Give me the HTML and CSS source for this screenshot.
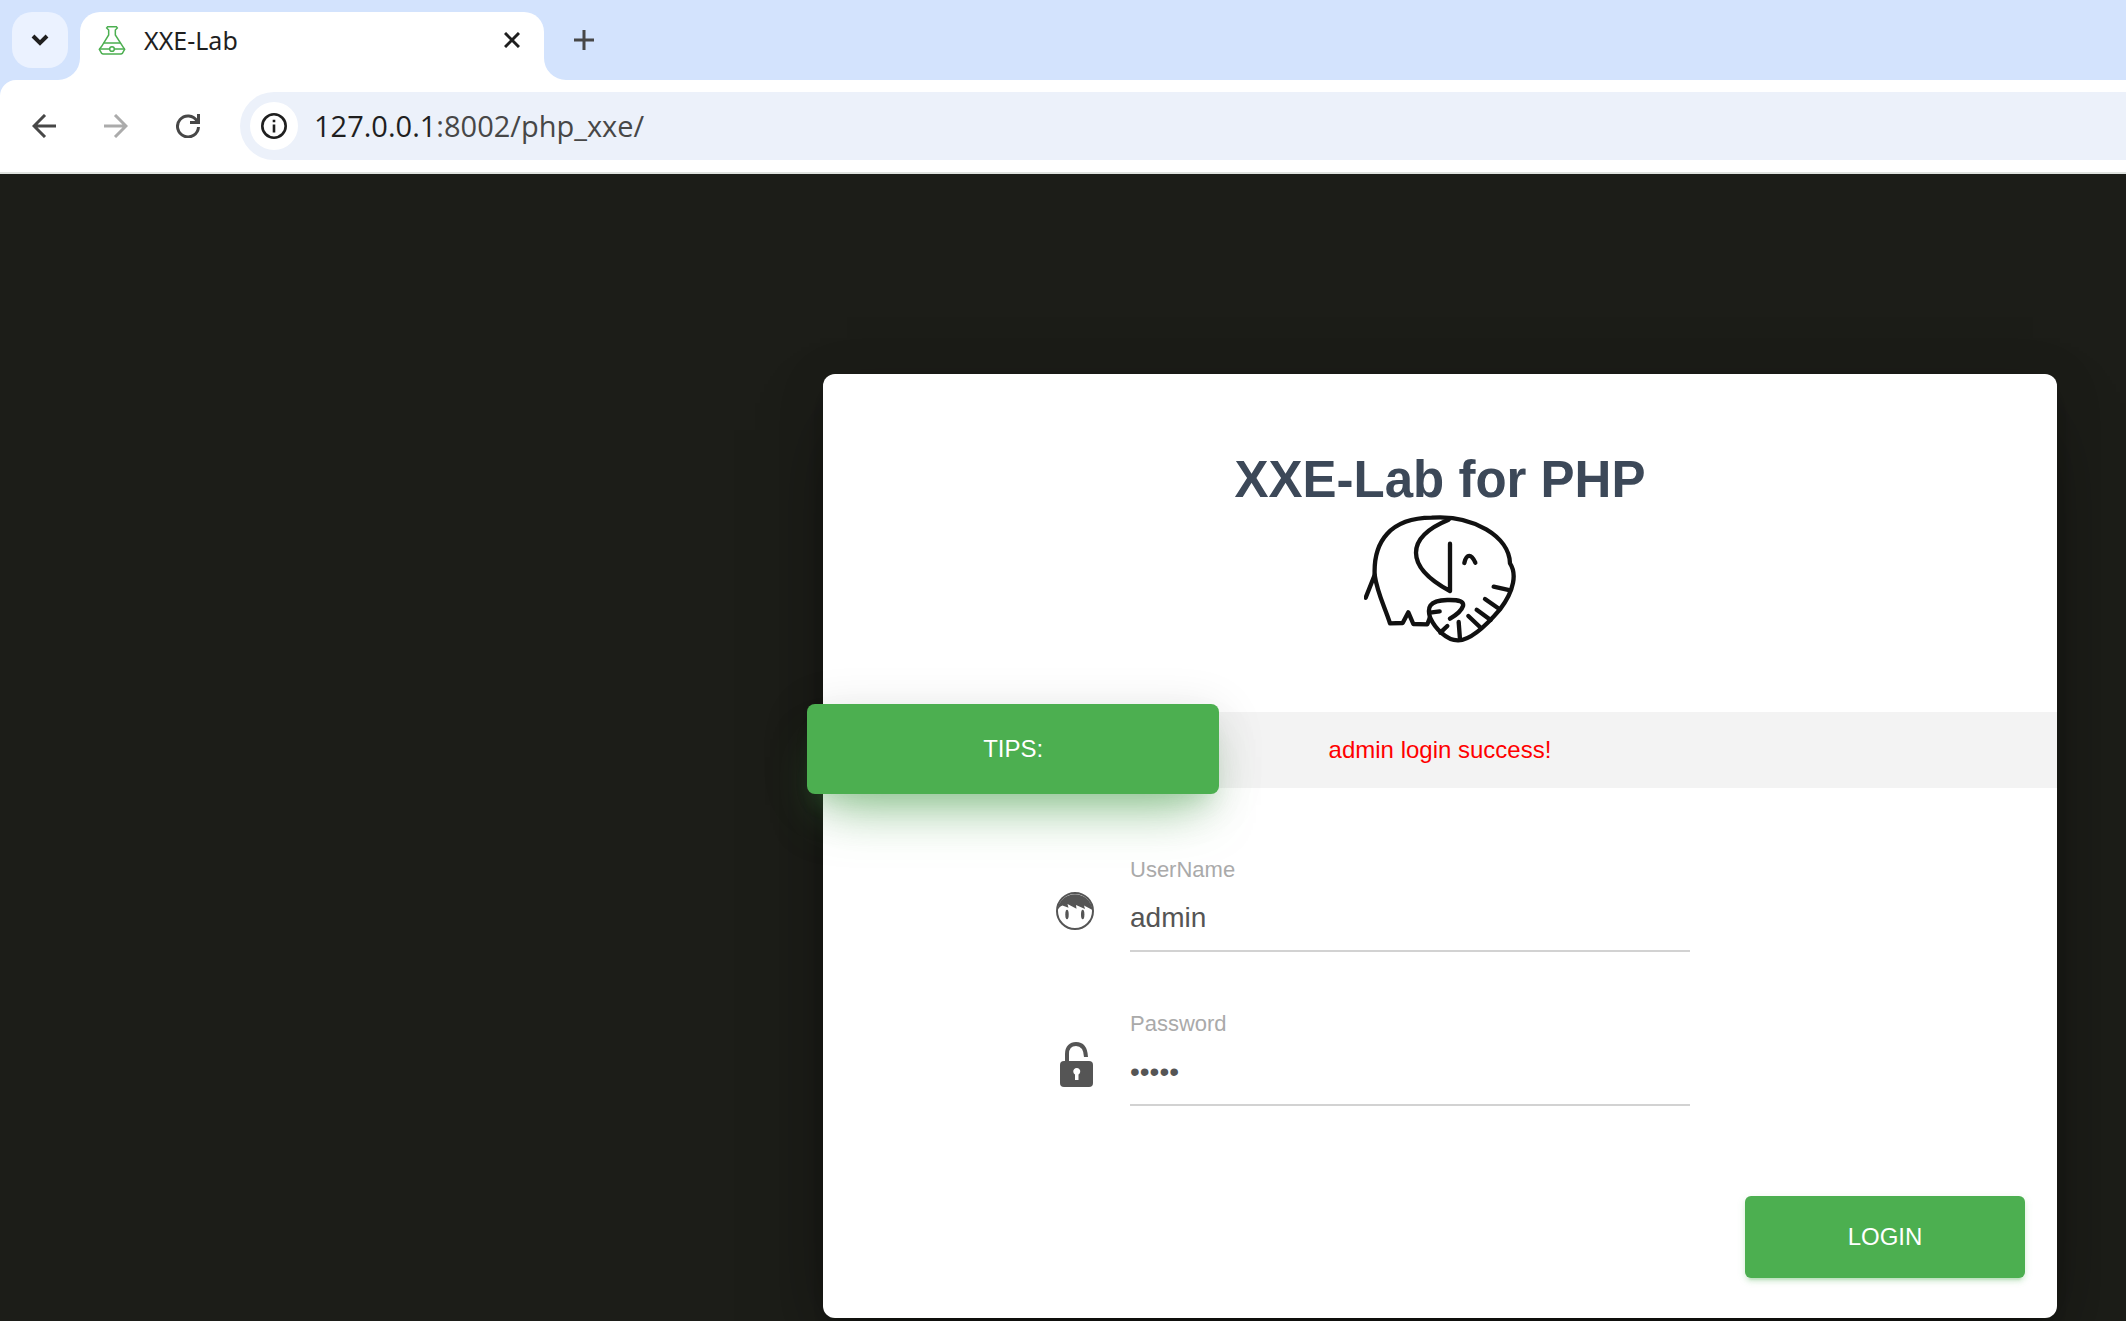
FILE: index.html
```html
<!DOCTYPE html>
<html lang="en">
<head>
<meta charset="utf-8">
<title>XXE-Lab</title>
<link rel="stylesheet" href="styles.css">
</head>
<body>
<header class="browser">
  <div class="tab-strip">
    <button class="tab-search" type="button" aria-label="Search tabs">
      <svg width="56" height="56" viewBox="0 0 56 56"><path d="M21 24l7 7 7-7" fill="none" stroke="#1f1f1f" stroke-width="4"/></svg>
    </button>
    <div class="tab">
      <svg class="tab-curve" width="22" height="22" viewBox="0 0 22 22"><path d="M22 0v22H0A22 22 0 0 0 22 0z" fill="#fff"/></svg>
      <svg class="favicon" width="28" height="30" viewBox="0 0 84 90" fill="none" stroke="#4caf50" stroke-width="4.500">
        <path d="M29 5h26l3 4-6 6v15l22 34 6 9-7 12-4 2H15l-4-2-7-12 7-9 21-34V15l-6-6z"/>
        <path d="M17 54h50M4 72h31M49 72h31"/><circle cx="42" cy="72" r="7"/>
      </svg>
      <span class="tab-title">XXE-Lab</span>
      <button class="tab-close" type="button" aria-label="Close tab">
        <svg width="16" height="16" viewBox="0 0 16 16"><path d="M1 1l14 14M15 1L1 15" stroke="#1f1f1f" stroke-width="3"/></svg>
      </button>
      <svg class="tab-curve tab-curve-right" width="22" height="22" viewBox="0 0 22 22"><path d="M0 0v22h22A22 22 0 0 1 0 0z" fill="#fff"/></svg>
    </div>
    <button class="new-tab" type="button" aria-label="New tab">
      <svg width="20" height="20" viewBox="0 0 20 20"><path d="M10 0v20M0 10h20" stroke="#474747" stroke-width="3"/></svg>
    </button>
  </div>
  <nav class="toolbar" aria-label="Browser">
    <button class="nav-button" type="button" aria-label="Back">
      <svg width="24" height="24" viewBox="0 0 24 24"><path d="M24 12H2M13 1L2 12l11 11" fill="none" stroke="#474747" stroke-width="3"/></svg>
    </button>
    <button class="nav-button" type="button" aria-label="Forward">
      <svg width="24" height="24" viewBox="0 0 24 24"><path d="M0 12h22M11 1l11 11-11 11" fill="none" stroke="#ababab" stroke-width="3"/></svg>
    </button>
    <button class="nav-button" type="button" aria-label="Reload">
      <svg width="24" height="24" viewBox="0 0 24 24" fill="none" stroke="#474747" stroke-width="3"><path d="M21 7A10.500 10.500 0 1 0 22.500 13"/><path d="M22.500 0v8.500H14"/></svg>
    </button>
    <div class="address">
      <button class="site-info" type="button" aria-label="Site information">
        <svg width="26" height="26" viewBox="0 0 26 26"><circle cx="13" cy="13" r="11.700" fill="none" stroke="#1f1f1f" stroke-width="2.600"/><path d="M13 11.500v8M13 6.800v2.500" stroke="#1f1f1f" stroke-width="2.600"/></svg>
      </button>
      <span class="url"><span class="url-host">127.0.0.1</span>:8002/php_xxe/</span>
    </div>
  </nav>
</header>
<main class="page">
  <form class="card">
    <h1 class="card-title">XXE-Lab for PHP</h1>
    <svg class="elephant" width="152" height="128" viewBox="72 45 456 384" fill="none" stroke="#111" stroke-width="13" stroke-linecap="round" stroke-linejoin="round">
      <path d="M77 293L104 225C100 125 150 54 275 53C400 44 508 110 510 190C530 220 524 270 480 328C440 375 395 420 355 421C320 422 285 385 270 352C262 325 264 302 322 300C360 299 372 305 369 318C364 334 347 346 330 356"/>
      <path d="M104 225C112 280 134 320 150 370L188 369 205 337 220 372 262 373 270 352"/>
      <path d="M326 59C270 82 228 115 228 158C228 205 278 245 330 273V131"/>
      <path d="M373 189C380 160 394 162 406 188M461 260l50 11M435 297l43 30M410 329l42 31M385 348l38 36M356 366l4 52M322 378l-21 20M299 334l-29 4"/>
    </svg>
    <div class="tips-bar">
      <div class="tips-label">TIPS:</div>
      <output class="tips-message">admin login success!</output>
    </div>
    <div class="fields">
      <div class="field">
        <svg class="field-icon" width="38" height="38" viewBox="0 0 38 38"><circle cx="19" cy="19" r="18" fill="#fff" stroke="#555" stroke-width="2"/><path d="M1.500 18A17.600 17.600 0 0 1 36.500 18L28 13.500l1 3.500-9-4 .5 3.800-9-4.800 1 3.800-6-2.300C4 14 3 16 1.500 18z" fill="#555"/><ellipse cx="11" cy="22.500" rx="1.700" ry="4.800" fill="#555"/><ellipse cx="26.700" cy="22.500" rx="1.700" ry="4.800" fill="#555"/></svg>
        <div class="control">
          <label for="username">UserName</label>
          <input id="username" type="text" value="admin">
        </div>
      </div>
      <div class="field">
        <svg class="field-icon" width="36" height="46" viewBox="-3 0 36 46"><path d="M7 20v-8C7 5 11 2 16 2s9.500 3 10 13" fill="none" stroke="#555" stroke-width="4"/><rect x="0" y="19" width="33" height="26" rx="4" fill="#555"/><path d="M15 38v-5.500a3.500 3.500 0 1 1 3.500 0V38z" fill="#fff"/></svg>
        <div class="control">
          <label for="password">Password</label>
          <input id="password" type="password" value="admin">
        </div>
      </div>
    </div>
    <button class="login" type="button">LOGIN</button>
  </form>
</main>
</body>
</html>
```
FILE: styles.css
```css
* { box-sizing: border-box; }
body {
  margin: 0;
  min-height: 100vh;
  display: flex;
  flex-direction: column;
  background: #1c1d18;
  font-family: "Liberation Sans", Arial, sans-serif;
}
button {
  border: 0;
  padding: 0;
  background: none;
  font: inherit;
}
svg { display: block; flex: none; }

/* Browser frame */
.browser {
  background: #d3e3fd;
  font-family: "Noto Sans", sans-serif;
}
.tab-strip {
  display: flex;
  align-items: center;
  height: 80px;
  padding-left: 12px;
}
.tab-search {
  width: 56px;
  height: 56px;
  border-radius: 20px;
  background: #ebf2ff;
}
.tab {
  position: relative;
  display: flex;
  align-items: center;
  align-self: flex-end;
  width: 464px;
  height: 68px;
  margin-left: 12px;
  padding: 0 24px 12px 18px;
  border-radius: 20px 20px 0 0;
  background: #fff;
}
.tab-curve {
  position: absolute;
  bottom: 0;
  right: 100%;
}
.tab-curve-right {
  right: auto;
  left: 100%;
}
.tab-title {
  flex: 1;
  margin-left: 18px;
  font-size: 25px;
  color: #1f1f1f;
}
.new-tab { margin-left: 30px; }
.toolbar {
  display: flex;
  align-items: center;
  height: 94px;
  padding-left: 8px;
  border-bottom: 2px solid #dfe3df;
  border-radius: 16px 0 0;
  background: #fff;
}
.nav-button {
  display: grid;
  place-items: center;
  width: 72px;
  height: 68px;
}
.address {
  flex: 1;
  display: flex;
  align-items: center;
  height: 68px;
  margin-left: 16px;
  padding-left: 10px;
  border-radius: 34px 0 0 34px;
  background: #ecf1fa;
}
.site-info {
  display: grid;
  place-items: center;
  width: 48px;
  height: 48px;
  border-radius: 50%;
  background: #fff;
}
.url {
  margin-left: 16px;
  padding-bottom: 2px;
  font-family: "Open Sans", sans-serif;
  font-size: 29px;
  color: #474747;
}
.url-host { color: #1f1f1f; }

/* Login page */
.page {
  flex: 1;
  padding: 200px 69px 0 823px;
}
.card {
  display: flex;
  flex-direction: column;
  padding: 76px 0 40px;
  border-radius: 12px;
  background: #fff;
  box-shadow: 0 32px 76px -24px rgba(0, 0, 0, .56), 0 8px 50px rgba(0, 0, 0, .12), 0 16px 20px -10px rgba(0, 0, 0, .2);
}
.card-title {
  margin: 0;
  font-size: 51px;
  line-height: 60px;
  text-align: center;
  color: #3c4858;
}
.elephant {
  align-self: center;
  margin-top: 5px;
}
.tips-bar {
  display: grid;
  grid-template-columns: 1fr 1fr 1fr;
  grid-template-rows: 76px;
  align-items: center;
  margin-top: 69px;
  background: #f3f3f3;
  font-size: 24px;
  text-align: center;
}
.tips-label {
  height: 90px;
  margin: -8px 15px -6px -16px;
  border-radius: 8px;
  background: #4caf50;
  color: #fff;
  line-height: 90px;
  box-shadow: 0 32px 52px -20px rgba(76, 175, 80, .56), 0 8px 50px rgba(0, 0, 0, .12), 0 16px 20px -10px rgba(76, 175, 80, .2);
}
.tips-message { color: #f00; }
.fields {
  display: grid;
  gap: 58px;
  margin: 68px 367px 0 232px;
}
.field {
  display: grid;
  grid-template-columns: 40px 1fr;
  column-gap: 35px;
  align-items: center;
}
.field-icon {
  justify-self: center;
  margin-top: 14px;
}
.control {
  display: flex;
  flex-direction: column;
  gap: 2px;
}
.control label {
  font-size: 22px;
  line-height: 28px;
  color: #aaa;
}
.control input {
  width: 100%;
  height: 66px;
  padding: 16px 0;
  border: 0;
  border-bottom: 2px solid #d2d2d2;
  background: none;
  font: 28px/32px "Liberation Sans", Arial, sans-serif;
  color: #555;
  outline: 0;
}
.login {
  align-self: flex-end;
  width: 280px;
  height: 82px;
  margin: 90px 32px 0 0;
  border-radius: 6px;
  background: #4caf50;
  color: #fff;
  font-size: 24px;
  box-shadow: 0 4px 4px rgba(76, 175, 80, .14), 0 6px 2px -4px rgba(76, 175, 80, .2), 0 2px 10px rgba(76, 175, 80, .12);
}
```
